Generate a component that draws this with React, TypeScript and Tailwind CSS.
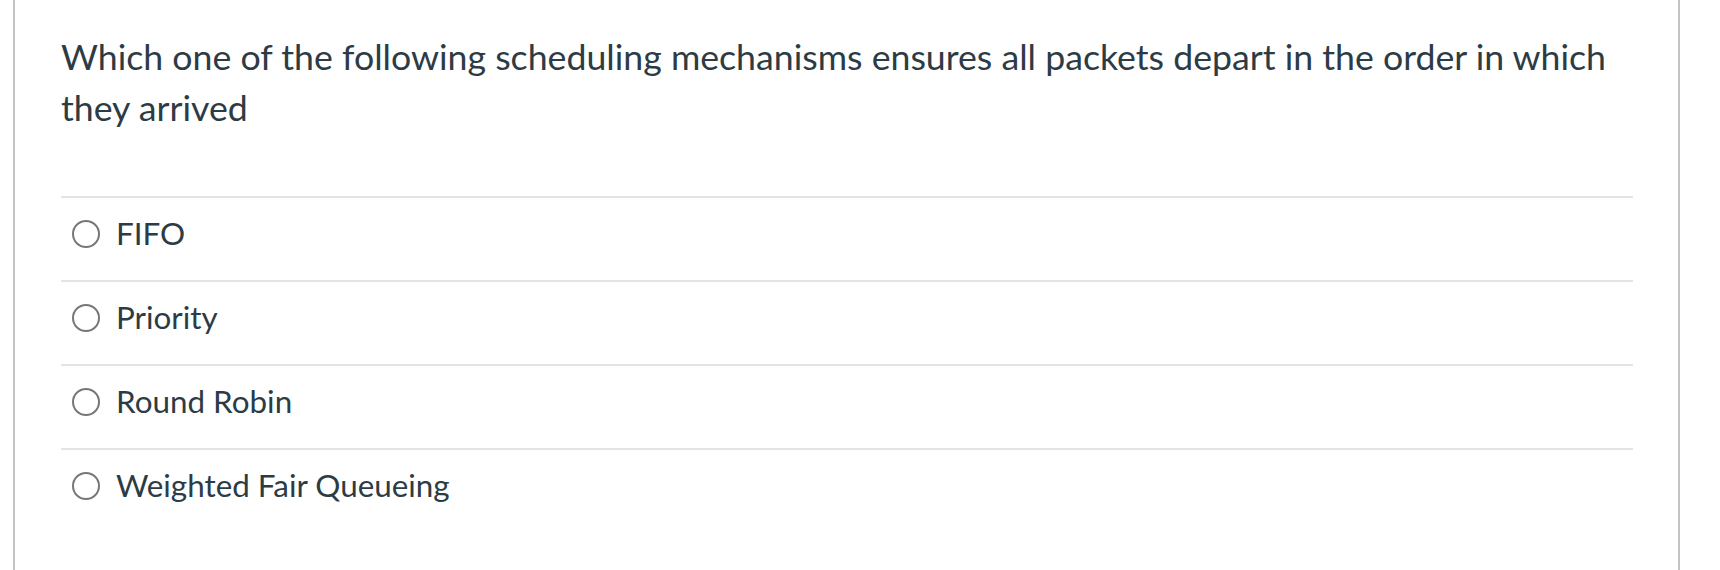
import React from "react";

const options = ["FIFO", "Priority", "Round Robin", "Weighted Fair Queueing"];

export default function App() {
  return (
    <div className="min-h-[570px] w-[1720px] bg-white" style={{ fontFamily: "Lato, 'Noto Sans', sans-serif" }}>
      <div className="ml-[13px] w-[1667px] min-h-[570px] border-l-2 border-r-2 border-[#c4c4c4] pl-[46px] pr-[45px] pt-[31px] text-[#2d3b45]">
        <p className="text-[35.7px] leading-[51px]">
          Which one of the following scheduling mechanisms ensures all packets depart in the order in which they arrived
        </p>
        <div className="mt-[63px]">
          {options.map((o) => (
            <div key={o} className="flex items-center border-t-2 border-[#e4e4e4] pt-[14px] pb-[26px] pl-[11px]">
              <span className="mt-[2px] block h-[28px] w-[28px] shrink-0 rounded-full border-2 border-[#777777] bg-white" />
              <span className="ml-[16px] text-[31.4px] leading-[42px]">{o}</span>
            </div>
          ))}
        </div>
      </div>
    </div>
  );
}
